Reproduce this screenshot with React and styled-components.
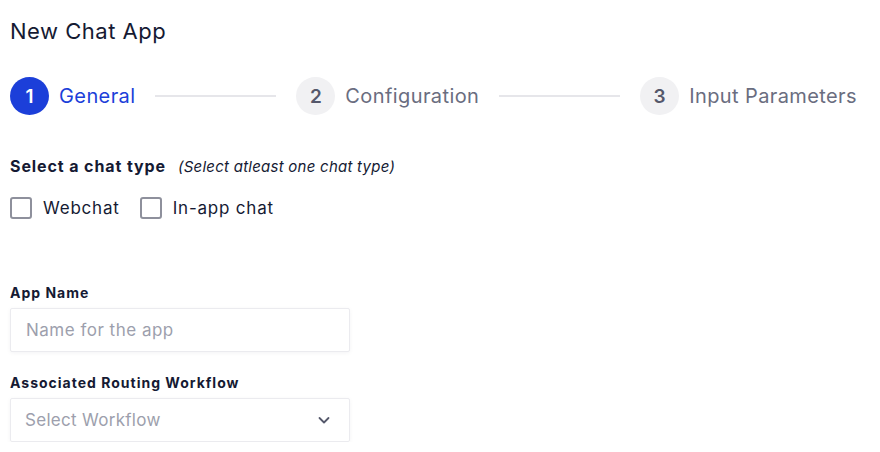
import React from 'react';
import styled, { createGlobalStyle } from 'styled-components';

const GlobalStyle = createGlobalStyle`
  html, body {
    margin: 0;
    padding: 0;
    background: #ffffff;
  }
  body {
    font-family: 'Inter', 'Open Sans', sans-serif;
    color: #151a33;
  }
  * { box-sizing: border-box; }
`;

const Page = styled.div`
  width: 880px;
  padding: 16px 10px 0 10px;
`;

const Title = styled.h1`
  margin: 0;
  font-size: 22px;
  font-weight: 400;
  letter-spacing: 0.5px;
  line-height: 30px;
  color: #151a33;
`;

const Stepper = styled.div`
  display: flex;
  align-items: center;
  margin-top: 31px;
  width: 847px;
`;

const Step = styled.div`
  display: flex;
  align-items: center;
  gap: 10px;
  flex-shrink: 0;
`;

const StepCircle = styled.div`
  width: 39px;
  height: 38px;
  border-radius: 50%;
  display: flex;
  align-items: center;
  justify-content: center;
  font-size: 19px;
  font-weight: 600;
  background: ${p => (p.$active ? '#1c3fd9' : '#f1f1f3')};
  color: ${p => (p.$active ? '#ffffff' : '#55586b')};
`;

const StepLabel = styled.span`
  font-size: 20px;
  letter-spacing: 0.4px;
  color: ${p => (p.$active ? '#1c3fd9' : '#6a6d80')};
`;

const StepLine = styled.div`
  flex: 1;
  height: 2px;
  background: #e6e6ea;
  margin: 0 20px;
`;

const SectionHead = styled.div`
  display: flex;
  align-items: baseline;
  gap: 12px;
  margin-top: 41px;
  line-height: 20px;
`;

const SectionTitle = styled.span`
  font-size: 16px;
  font-weight: 700;
  letter-spacing: 0.9px;
  color: #151a33;
`;

const Hint = styled.span`
  font-size: 15px;
  font-style: italic;
  letter-spacing: 0.25px;
  color: #151a33;
`;

const CheckRow = styled.div`
  display: flex;
  align-items: center;
  gap: 20px;
  margin-top: 20px;
`;

const CheckLabel = styled.label`
  display: flex;
  align-items: center;
  gap: 11px;
  font-size: 17px;
  letter-spacing: 0.8px;
  color: #151a33;
  cursor: pointer;
`;

const Box = styled.span`
  width: 22px;
  height: 22px;
  border: 2px solid #8e909c;
  border-radius: 3px;
  background: #fff;
`;

const Field = styled.div`
  display: flex;
  flex-direction: column;
  gap: 6px;
  width: 340px;
  margin-top: ${p => p.$top}px;
`;

const FieldLabel = styled.label`
  font-size: 14px;
  font-weight: 700;
  letter-spacing: 1px;
  line-height: 18px;
  color: #151a33;
`;

const Input = styled.input`
  height: 44px;
  width: 100%;
  border: 1px solid #ebebef;
  border-radius: 2px;
  padding: 0 15px;
  font-family: inherit;
  font-size: 17px;
  letter-spacing: 0.5px;
  color: #151a33;
  box-shadow: 0 1px 4px rgba(20, 20, 50, 0.05);
  outline: none;
  &::placeholder {
    color: #9d9fad;
  }
`;

const Select = styled.div`
  height: 44px;
  width: 100%;
  border: 1px solid #ebebef;
  border-radius: 2px;
  padding: 0 18px 0 14px;
  display: flex;
  align-items: center;
  justify-content: space-between;
  font-size: 17px;
  letter-spacing: 0.3px;
  color: #9d9fad;
  box-shadow: 0 1px 4px rgba(20, 20, 50, 0.05);
`;

const steps = ['General', 'Configuration', 'Input Parameters'];

function Chevron() {
  return (
    <svg width="14" height="14" viewBox="0 0 14 14" fill="none">
      <path d="M2.5 5l4.5 4.5L11.5 5" stroke="#55586b" strokeWidth="1.8" strokeLinecap="round" strokeLinejoin="round" />
    </svg>
  );
}

export default function App() {
  return (
    <Page>
      <GlobalStyle />
      <Title>New Chat App</Title>

      <Stepper>
        {steps.map((s, i) => (
          <React.Fragment key={s}>
            {i > 0 && <StepLine />}
            <Step>
              <StepCircle $active={i === 0}>{i + 1}</StepCircle>
              <StepLabel $active={i === 0}>{s}</StepLabel>
            </Step>
          </React.Fragment>
        ))}
      </Stepper>

      <SectionHead>
        <SectionTitle>Select a chat type</SectionTitle>
        <Hint>(Select atleast one chat type)</Hint>
      </SectionHead>

      <CheckRow>
        <CheckLabel><Box />Webchat</CheckLabel>
        <CheckLabel><Box />In-app chat</CheckLabel>
      </CheckRow>

      <Field $top={65}>
        <FieldLabel>App Name</FieldLabel>
        <Input placeholder="Name for the app" />
      </Field>

      <Field $top={22}>
        <FieldLabel>Associated Routing Workflow</FieldLabel>
        <Select>
          <span>Select Workflow</span>
          <Chevron />
        </Select>
      </Field>
    </Page>
  );
}
